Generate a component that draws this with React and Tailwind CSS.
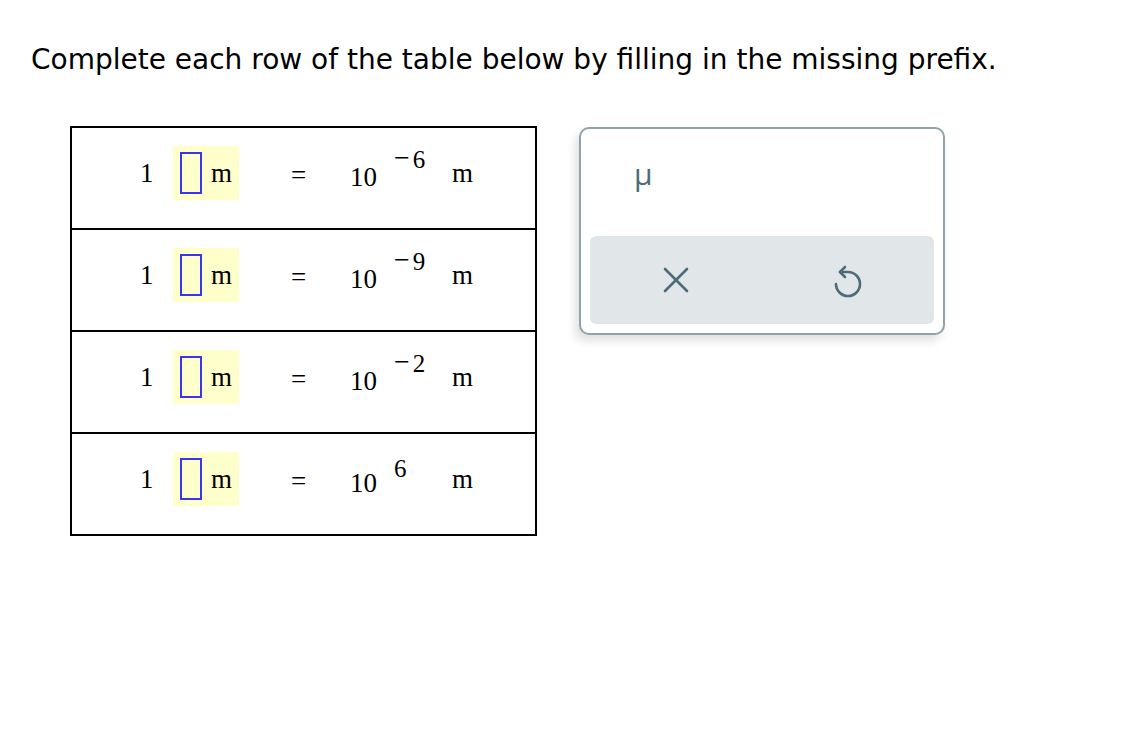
import React from 'react'

const ROWS = [
  { sign: true, exp: '6' },
  { sign: true, exp: '9' },
  { sign: true, exp: '2' },
  { sign: false, exp: '6' },
]

const serif = { fontFamily: '"Liberation Serif", "Times New Roman", serif' }

function Row({ sign, exp, last }) {
  return (
    <div className={`flex items-start pl-[68px] text-[27px] leading-none text-black ${last ? 'h-[100px]' : 'h-[102px] border-b-2 border-black'}`} style={serif}>
      <span className="mt-[32px] w-[33px]">1</span>
      <span className="mt-[18px] flex h-[54px] w-[66px] items-start bg-[#ffffcc]">
        <span className="mt-[6px] ml-[7px] h-[42px] w-[22px] border-2 border-[#3535f2] bg-[#ffffcc]" />
        <span className="mt-[14px] ml-[9px]">m</span>
      </span>
      <span className="mt-[34px] ml-[52px] w-[59px]">=</span>
      <span className="mt-[36px] w-[44px]">10</span>
      <span className={`flex w-[58px] items-end text-[25px] ${sign ? 'mt-[16px]' : 'mt-[22px]'}`}>
        {sign && <span className="text-[28px]">−</span>}
        <span className={sign ? 'ml-[3px]' : ''}>{exp}</span>
      </span>
      <span className="mt-[32px]">m</span>
    </div>
  )
}

export default function App() {
  return (
    <div className="h-[746px] w-[1147px] bg-white">
      <h1 className="pt-[43px] pl-[31px] text-[28px] leading-[34px] text-black" style={{ fontFamily: '"DejaVu Sans", Verdana, sans-serif' }}>
        Complete each row of the table below by filling in the missing prefix.
      </h1>
      <div className="mt-[49px] flex items-start pl-[70px]">
        <div className="w-[467px] border-2 border-black">
          {ROWS.map((r, i) => (
            <Row key={i} {...r} last={i === ROWS.length - 1} />
          ))}
        </div>
        <div className="mt-[1px] ml-[42px] flex h-[208px] w-[366px] flex-col rounded-[10px] border-2 border-[#8fa3ad] bg-white px-[9px] pb-[9px] shadow-[-4px_6px_10px_rgba(0,0,0,0.12)]">
          <div className="flex h-[107px] items-start pl-[44px] pt-[30px]">
            <span className="text-[30px] leading-none text-[#4b6c78]" style={{ fontFamily: '"Open Sans", sans-serif' }}>µ</span>
          </div>
          <div className="flex h-[88px] rounded-[6px] bg-[#e1e6e9]">
            <button className="flex flex-1 items-center justify-center">
              <svg width="26" height="26" viewBox="0 0 26 26" fill="none" stroke="#4b6c78" strokeWidth="2.6" strokeLinecap="round">
                <path d="M2 2L24 24M24 2L2 24" />
              </svg>
            </button>
            <button className="flex flex-1 items-center justify-center">
              <svg width="32" height="34" viewBox="0 0 32 34" fill="none" stroke="#4b6c78" strokeWidth="2.6" strokeLinecap="round" strokeLinejoin="round" className="mt-[4px]">
                <path d="M13 2L8 7L13 12" />
                <path d="M8 7H16A12 12 0 1 1 4 19" />
              </svg>
            </button>
          </div>
        </div>
      </div>
    </div>
  )
}
